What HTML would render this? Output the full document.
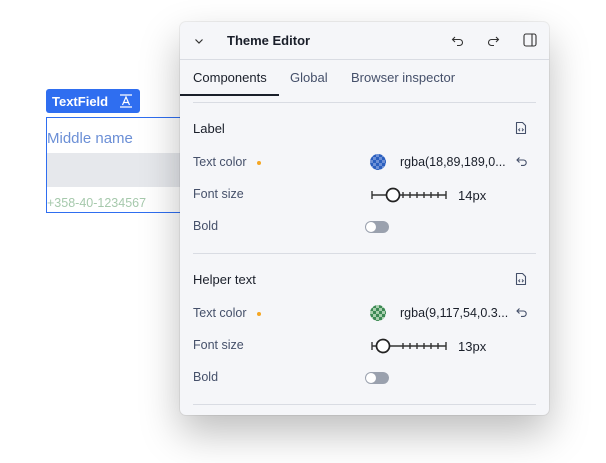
<!DOCTYPE html>
<html><head><meta charset="utf-8"><style>
*{box-sizing:border-box;margin:0;padding:0}
body{width:606px;height:463px;background:#fff;font-family:"Liberation Sans",sans-serif;position:relative;overflow:hidden}
.a{position:absolute}
.panel{left:180px;top:22px;width:369px;height:393px;background:#f5f6f9;border-radius:6px;box-shadow:0 18px 40px rgba(0,0,0,.26),0 0 0 1px rgba(0,0,0,.06);overflow:hidden}
.t{font-size:13px;color:#1a1f2a}
.l{font-size:12.5px;color:#45506a}
.hr{height:1px;background:#d9dce3}
</style></head><body>
<div class="a" style="left:46px;top:89px;width:94px;height:24px;background:#2f6ef0;border-radius:3px"></div>
<div class="a" style="left:52px;top:94px;font-size:13px;color:#fff;font-weight:bold">TextField</div>
<svg class="a" style="left:118px;top:93px" width="16" height="16" viewBox="0 0 16 16"><path d="M2 2h12M2 14h12M4.5 12L8 4l3.5 8M6 9.5h4" stroke="#fff" stroke-width="1.2" fill="none"/></svg>
<div class="a" style="left:46px;top:117px;width:150px;height:96px;border:1px solid #2f6ef0"></div>
<div class="a" style="left:47px;top:130px;font-size:15px;color:#6b8fd6">Middle name</div>
<div class="a" style="left:47px;top:153px;width:140px;height:34px;background:#e6e8ec"></div>
<div class="a" style="left:47px;top:196px;font-size:12.5px;color:#a6c9ac">+358-40-1234567</div>

<div class="a panel">
<svg class="a" style="left:13px;top:13px" width="12" height="12" viewBox="0 0 12 12"><path d="M2.5 4.5L6 8l3.5-3.5" stroke="#333" stroke-width="1.2" fill="none"/></svg>
<div class="a t" style="left:47px;top:11px;font-weight:bold">Theme Editor</div>
<svg class="a" style="left:270px;top:11px" width="16" height="16" viewBox="0 0 16 16"><path d="M5 4L2.5 6.5 5 9M2.5 6.5h7a3 3 0 010 6H7" stroke="#333" stroke-width="1.1" fill="none"/></svg>
<svg class="a" style="left:305px;top:11px" width="16" height="16" viewBox="0 0 16 16"><path d="M11 4l2.5 2.5L11 9M13.5 6.5h-7a3 3 0 000 6H9" stroke="#333" stroke-width="1.1" fill="none"/></svg>
<svg class="a" style="left:342px;top:10px" width="16" height="16" viewBox="0 0 16 16"><rect x="2" y="2" width="12" height="12" rx="2" stroke="#333" stroke-width="1.1" fill="none"/><path d="M10 2v12" stroke="#333" stroke-width="1.1"/></svg>
<div class="a hr" style="left:0;top:37px;width:369px"></div>
<div class="a t" style="left:13px;top:48px">Components</div>
<div class="a l" style="left:110px;top:48px;font-size:13px">Global</div>
<div class="a l" style="left:171px;top:48px;font-size:13px">Browser inspector</div>
<div class="a" style="left:0;top:72px;width:99px;height:1.5px;background:#1a1f2a"></div>
<div class="a hr" style="left:13px;top:80px;width:343px"></div>

<div class="a t" style="left:13px;top:99px">Label</div>
<svg class="a" style="left:334px;top:98px" width="14" height="16" viewBox="0 0 14 16"><path d="M2.5 2.5h6l3 3v8h-9z" stroke="#45506a" stroke-width="1.1" fill="none" stroke-linejoin="round"/><path d="M6 8.5l-1.3 1.3L6 11.1M8 8.5l1.3 1.3L8 11.1" stroke="#45506a" stroke-width="1" fill="none"/></svg>
<div class="a l" style="left:13px;top:133px">Text color</div>
<div class="a" style="left:77px;top:139px;width:4px;height:4px;border-radius:2px;background:#f5a623"></div>
<div class="a" style="left:190px;top:132px;width:16px;height:16px;border-radius:8px;background:repeating-conic-gradient(#2a5fbf 0 25%,#6d90d6 0 50%) 0 0/6px 6px"></div>
<div class="a t" style="left:220px;top:133px;font-size:12.5px">rgba(18,89,189,0...</div>
<svg class="a" style="left:335px;top:133px" width="14" height="14" viewBox="0 0 14 14"><path d="M4.5 2.5L2 5l2.5 2.5M2 5h6.5a2.7 2.7 0 010 5.4H6" stroke="#45506a" stroke-width="1.1" fill="none"/></svg>
<div class="a l" style="left:13px;top:165px">Font size</div>
<svg class="a" style="left:190px;top:164px" width="80" height="18" viewBox="0 0 80 18"><path d="M2 9h74M2 5v8M76 5v8M33 6v6M40 6v6M47 6v6M54 6v6M61 6v6M68 6v6" stroke="#333" stroke-width="1.4"/><circle cx="23" cy="9" r="6.5" fill="#fff" stroke="#222" stroke-width="1.7"/></svg>
<div class="a t" style="left:278px;top:166px">14px</div>
<div class="a l" style="left:13px;top:197px">Bold</div>
<div class="a" style="left:185px;top:199px;width:24px;height:12px;border-radius:6px;background:#9aa1ae"></div>
<div class="a" style="left:186px;top:200px;width:10px;height:10px;border-radius:5px;background:#fff"></div>
<div class="a hr" style="left:13px;top:231px;width:343px"></div>

<div class="a t" style="left:13px;top:250px">Helper text</div>
<svg class="a" style="left:334px;top:249px" width="14" height="16" viewBox="0 0 14 16"><path d="M2.5 2.5h6l3 3v8h-9z" stroke="#45506a" stroke-width="1.1" fill="none" stroke-linejoin="round"/><path d="M6 8.5l-1.3 1.3L6 11.1M8 8.5l1.3 1.3L8 11.1" stroke="#45506a" stroke-width="1" fill="none"/></svg>
<div class="a l" style="left:13px;top:284px">Text color</div>
<div class="a" style="left:77px;top:290px;width:4px;height:4px;border-radius:2px;background:#f5a623"></div>
<div class="a" style="left:190px;top:283px;width:16px;height:16px;border-radius:8px;background:repeating-conic-gradient(#3d8a55 0 25%,#a8cfae 0 50%) 0 0/6px 6px"></div>
<div class="a t" style="left:220px;top:284px;font-size:12.5px">rgba(9,117,54,0.3...</div>
<svg class="a" style="left:335px;top:284px" width="14" height="14" viewBox="0 0 14 14"><path d="M4.5 2.5L2 5l2.5 2.5M2 5h6.5a2.7 2.7 0 010 5.4H6" stroke="#45506a" stroke-width="1.1" fill="none"/></svg>
<div class="a l" style="left:13px;top:316px">Font size</div>
<svg class="a" style="left:190px;top:315px" width="80" height="18" viewBox="0 0 80 18"><path d="M2 9h74M2 5v8M76 5v8M33 6v6M40 6v6M47 6v6M54 6v6M61 6v6M68 6v6" stroke="#333" stroke-width="1.4"/><circle cx="13" cy="9" r="6.5" fill="#fff" stroke="#222" stroke-width="1.7"/></svg>
<div class="a t" style="left:278px;top:317px">13px</div>
<div class="a l" style="left:13px;top:348px">Bold</div>
<div class="a" style="left:185px;top:350px;width:24px;height:12px;border-radius:6px;background:#9aa1ae"></div>
<div class="a" style="left:186px;top:351px;width:10px;height:10px;border-radius:5px;background:#fff"></div>
<div class="a hr" style="left:13px;top:382px;width:343px"></div>
</div>
</body></html>
